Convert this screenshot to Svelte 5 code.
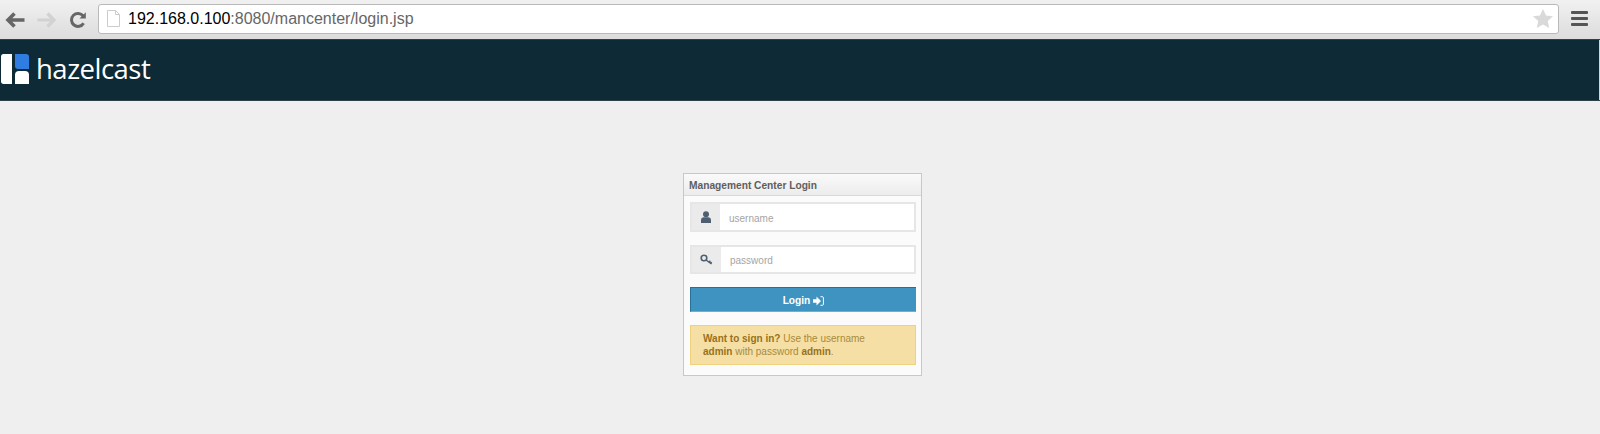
<script>
	let username = $state('');
	let password = $state('');
</script>

<div class="page">
	<div class="toolbar">
		<div class="nav">
			<svg width="22" height="18" viewBox="0 0 22 18" class="back">
				<path d="M9.5 2.5 L3 9 L9.5 15.5 M3 9 H19.5" fill="none" stroke="#666" stroke-width="3.6" />
			</svg>
			<svg width="22" height="18" viewBox="0 0 22 18" class="forward">
				<path d="M12.5 2.5 L19 9 L12.5 15.5 M19 9 H2.5" fill="none" stroke="#d2d2d2" stroke-width="3.2" />
			</svg>
			<svg width="18" height="18" viewBox="0 0 18 18" class="reload">
				<path d="M14.2 5 A6.5 6.5 0 1 0 14.6 12.2" fill="none" stroke="#666" stroke-width="3" />
				<path d="M10.5 7.5 L16.8 7.5 L16.8 1.2 Z" fill="#666" />
			</svg>
		</div>
		<div class="omnibox">
			<svg width="13" height="17" viewBox="0 0 13 17" class="page-icon">
				<path d="M.5.5 H8.5 L12.5 4.5 V16.5 H.5 Z M8.5.5 V4.5 H12.5" fill="#fff" stroke="#ccc" />
			</svg>
			<span class="url"><span class="host">192.168.0.100</span>:8080/mancenter/login.jsp</span>
			<svg width="20" height="19" viewBox="0 0 20 19" class="star">
				<path d="M10 0 L13 6.6 L20 7.3 L14.8 12 L16.2 19 L10 15.4 L3.8 19 L5.2 12 L0 7.3 L7 6.6 Z" fill="#d9d9d9" />
			</svg>
		</div>
		<div class="menu"><i></i><i></i><i></i></div>
	</div>

	<header class="brand">
		<svg width="29" height="30" viewBox="0 0 29 30">
			<path d="M3 0 H12 V30 H3 A2.5 2.5 0 0 1 1 28 V2 A2.5 2.5 0 0 1 3 0 Z" fill="#fff" />
			<path d="M15 0 H26 A3 3 0 0 1 29 3 V15 H18 A3 3 0 0 1 15 12 Z" fill="#2f7de1" />
			<path d="M15 30 V21 A4 4 0 0 1 19 17 H25 A4 4 0 0 1 29 21 V30 Z" fill="#fff" />
		</svg>
		<span class="wordmark">hazelcast</span>
	</header>

	<main class="content">
		<form class="card" onsubmit={(e) => e.preventDefault()}>
			<div class="card-title">Management Center Login</div>
			<div class="card-body">
				<div class="field">
					<span class="addon">
						<svg width="12" height="12" viewBox="0 0 12 12">
							<circle cx="6" cy="3.2" r="3" fill="#4d5f70" />
							<path d="M1 12 V9 Q1 6.5 3.5 6.2 H8.5 Q11 6.5 11 9 V12 Z" fill="#4d5f70" />
						</svg>
					</span>
					<input placeholder="username" bind:value={username} />
				</div>
				<div class="field second">
					<span class="addon wide">
						<svg width="13" height="12" viewBox="0 0 13 12">
							<circle cx="4" cy="4" r="2.8" fill="none" stroke="#4d5f70" stroke-width="1.6" />
							<path d="M6 6 L11.5 10 M9 8.2 L10.4 6.8 M10.6 9.4 L11.8 8.2" fill="none" stroke="#4d5f70" stroke-width="1.5" />
						</svg>
					</span>
					<input type="password" placeholder="password" bind:value={password} />
				</div>
				<button type="submit" class="login">
					Login
					<svg width="11" height="10" viewBox="0 0 11 10">
						<path d="M0 3.3 H3.5 V.6 L8 5 L3.5 9.4 V6.7 H0 Z" fill="#fff" />
						<path d="M7.5 .7 H9.3 Q10.4 .7 10.4 1.8 V8.2 Q10.4 9.3 9.3 9.3 H7.5" fill="none" stroke="#fff" stroke-width="1" />
					</svg>
				</button>
				<div class="alert">
					<b>Want to sign in?</b> Use the username<br />
					<b>admin</b> with password <b>admin</b>.
				</div>
			</div>
		</form>
	</main>
</div>

<style>
	:global(body) {
		background: #efefef;
	}

	.page {
		height: 434px;
		overflow: hidden;
		display: flex;
		flex-direction: column;
		font-family: 'Liberation Sans', Arial, sans-serif;
	}

	.toolbar {
		height: 39px;
		flex: none;
		display: flex;
		align-items: center;
		background: linear-gradient(#f1f1f1, #dcdcdc);
		border-bottom: 1px solid #3c3c3c;
		box-sizing: content-box;
	}

	.nav {
		display: flex;
		align-items: center;
		width: 98px;
		flex: none;
		padding-left: 5px;
		box-sizing: border-box;
	}

	.forward {
		margin-left: 8px;
	}

	.reload {
		margin-left: 12px;
	}

	.omnibox {
		flex: none;
		width: 1461px;
		height: 30px;
		display: flex;
		align-items: center;
		background: #fff;
		border: 1px solid #b9b9b9;
		border-radius: 3px;
		box-sizing: border-box;
		padding: 0 5px 0 8px;
		margin-top: -2px;
	}

	.url {
		flex: 1;
		margin-left: 8px;
		font-size: 16px;
		color: #666;
		white-space: nowrap;
	}

	.host {
		color: #000;
	}

	.menu {
		margin-left: 12px;
		margin-top: -2px;
		display: flex;
		flex-direction: column;
		gap: 3px;
	}

	.menu i {
		display: block;
		width: 17px;
		height: 3px;
		border-radius: 1px;
		background: #555;
	}

	.brand {
		height: 61px;
		flex: none;
		display: flex;
		align-items: center;
		background: #0d2a36;
		border-bottom: 1px solid #2f4148;
		box-shadow: inset -1px 0 0 #cfd5d8;
		box-sizing: border-box;
		padding-bottom: 2px;
	}

	.wordmark {
		margin-left: 7px;
		font-family: 'Open Sans', sans-serif;
		font-size: 27.5px;
		font-weight: 500;
		letter-spacing: -0.5px;
		line-height: 30px;
		color: #fff;
	}

	.content {
		flex: 1;
		display: flex;
		justify-content: center;
		align-items: flex-start;
		padding: 72px 0 0 5px;
	}

	.card {
		width: 239px;
		height: 203px;
		box-sizing: border-box;
		background: #fbfbfb;
		border: 1px solid #c8c8c8;
		color: #555;
	}

	.card-title {
		height: 21px;
		padding-left: 5px;
		line-height: 23px;
		font-size: 10.2px;
		font-weight: bold;
		color: #5e5e5e;
		background: linear-gradient(#fafafa, #ececec);
		border-bottom: 1px solid #d9d9d9;
		box-sizing: content-box;
	}

	.card-body {
		padding: 6px 5px 0 6px;
	}

	.field {
		display: flex;
		height: 30px;
		border: 2px solid #e6e6e6;
		box-sizing: border-box;
		background: #fff;
	}

	.field.second {
		margin-top: 13px;
		height: 29px;
	}

	.addon {
		flex: none;
		width: 28px;
		display: flex;
		align-items: center;
		justify-content: center;
		background: #ebebeb;
	}

	.addon.wide {
		width: 29px;
	}

	input {
		flex: 1;
		min-width: 0;
		border: 0;
		outline: 0;
		background: #fff;
		padding: 2px 9px 0;
		font: 10px 'Liberation Sans', Arial, sans-serif;
		color: #555;
	}

	input::placeholder {
		color: #a5a5a5;
		opacity: 1;
	}

	.login {
		display: flex;
		align-items: center;
		justify-content: center;
		gap: 3px;
		width: 100%;
		height: 25px;
		margin-top: 13px;
		padding: 2px 0 0;
		background: #3f93c0;
		border: 0;
		border-top: 1px solid #2a6f96;
		border-left: 1px solid #2a6f96;
		border-bottom: 1px solid #7fa9c2;
		color: #fff;
		font: bold 10.2px 'Liberation Sans', Arial, sans-serif;
	}

	.alert {
		height: 40px;
		margin-top: 13px;
		box-sizing: border-box;
		padding: 6px 12px 0;
		font-size: 10px;
		line-height: 13px;
		color: #a68a3e;
		background: #f6dfa4;
		border: 1px solid #f0d27c;
	}

	.alert b {
		color: #96721c;
	}
</style>
